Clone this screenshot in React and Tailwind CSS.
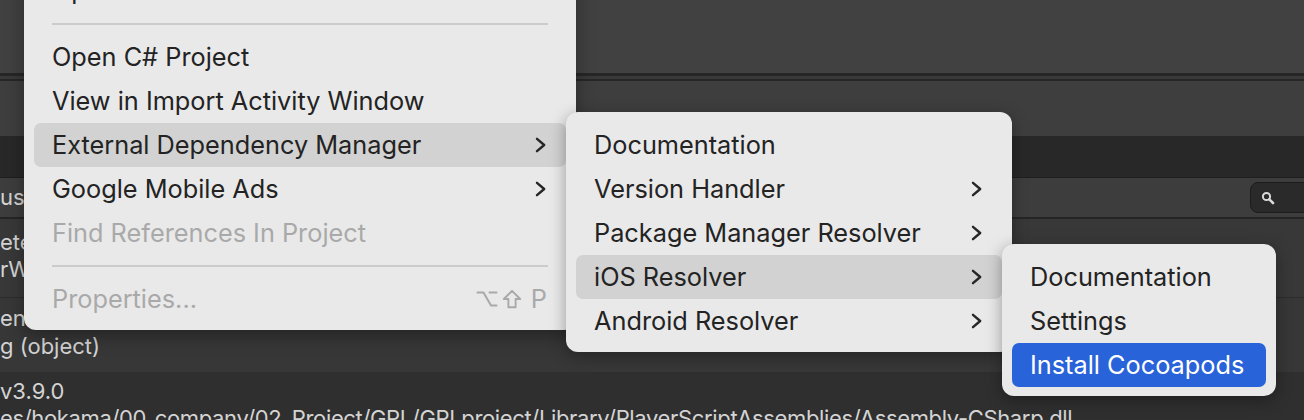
import React from "react";

const Chevron = () => (
  <svg width="13" height="16" viewBox="0 0 13 16" fill="none" className="shrink-0">
    <path d="M3 1.8L10.2 8L3 14.2" stroke="#262626" strokeWidth="2.4" strokeLinecap="round" strokeLinejoin="round" />
  </svg>
);

const Shortcut = () => (
  <span className="flex items-center gap-[4px] text-[#a9a9a9]">
    <svg width="22" height="18" viewBox="0 0 22 18" fill="none">
      <path d="M1.5 2.5H7.5L15 15.5H20.5M13.5 2.5H20.5" stroke="#a9a9a9" strokeWidth="2" strokeLinecap="round" strokeLinejoin="round" />
    </svg>
    <svg width="20" height="20" viewBox="0 0 20 20" fill="none">
      <path d="M10 1.8L18.2 10H13.6V18.2H6.4V10H1.8Z" stroke="#a9a9a9" strokeWidth="1.9" strokeLinejoin="round" />
    </svg>
    <span className="ml-[5px]">P</span>
  </span>
);

const Item = ({ label, sub, disabled, active, blue, shortcut }) => (
  <div
    className={
      "flex items-center justify-between h-[44px] mx-[10px] pl-[18px] pr-[19px] rounded-[7px] " +
      (blue ? "bg-[#2963d9] text-white" : active ? "bg-[#d2d2d2]" : "")
    }
  >
    <span className={"whitespace-nowrap " + (disabled ? "text-[#a9a9a9]" : blue ? "text-white" : "text-[#232323]")}>{label}</span>
    {sub ? <Chevron /> : null}
    {shortcut ? <Shortcut /> : null}
  </div>
);

const Sep = ({ h }) => (
  <div className={"flex items-center mx-[28px] " + h}>
    <div className="h-[2px] w-full bg-[#cbcbcb]" />
  </div>
);

export default function App() {
  return (
    <div
      className="relative w-[1304px] h-[420px] overflow-hidden bg-[#2e2e2e] text-[22px] text-[#d4d4d4]"
      style={{ fontFamily: "Inter, 'Noto Sans', sans-serif" }}
    >
      {/* background */}
      <div className="flex flex-col">
        <div className="h-[73px] bg-[#414141]" />
        <div className="h-[3px] bg-[#262626]" />
        <div className="h-[3px] bg-[#393939]" />
        <div className="h-[2px] bg-[#262626]" />
        <div className="h-[55px] bg-[#3e3e3e]" />
        <div className="h-[41px] bg-[#282828]" />
        <div className="h-[1px] bg-[#1f1f1f]" />
        <div className="h-[39px] bg-[#3d3d3d] flex items-center justify-between leading-[27px]">
          <span>used</span>
          <div className="w-[60px] h-[31px] mr-[-6px] rounded-l-[8px] bg-[#2a2a2a] border border-[#1c1c1c] flex items-center pl-[10px]">
            <svg width="14" height="14" viewBox="0 0 14 14" fill="none">
              <circle cx="5.5" cy="5.5" r="3.6" stroke="#d8d8d8" strokeWidth="2" />
              <path d="M8.3 8.3L12 12" stroke="#d8d8d8" strokeWidth="2.6" strokeLinecap="round" />
            </svg>
          </div>
        </div>
        <div className="h-[2px] bg-[#252525]" />
        <div className="h-[78px] bg-[#383838] pt-[10px] leading-[27px] flex flex-col">
          <span>eted</span>
          <span>rWindow</span>
        </div>
        <div className="h-[1px] bg-[#2c2c2c]" />
        <div className="h-[74px] bg-[#373737] pt-[6px] leading-[28px] flex flex-col">
          <span>ent</span>
          <span>g (object)</span>
        </div>
        <div className="h-[48px] bg-[#2f2f2f] pt-[6px] leading-[27px] flex flex-col whitespace-nowrap">
          <span>v3.9.0</span>
          <span className="tracking-[-0.35px]">es/hokama/00_company/02_Project/GPL/GPLproject/Library/PlayerScriptAssemblies/Assembly-CSharp.dll</span>
        </div>
      </div>

      {/* main menu */}
      <div className="absolute left-[24px] top-[-45px] w-[552px] pt-[13px] pb-[9px] bg-[#e9e9e9] rounded-[12px] text-[25.3px] shadow-[0_6px_18px_rgba(0,0,0,0.35)]">
        <Item label="Open C# Solution" />
        <Sep h="h-[23px]" />
        <Item label="Open C# Project" />
        <Item label="View in Import Activity Window" />
        <Item label="External Dependency Manager" sub active />
        <Item label="Google Mobile Ads" sub />
        <Item label="Find References In Project" disabled />
        <Sep h="h-[22px]" />
        <Item label="Properties..." disabled shortcut />
      </div>

      {/* submenu 1 */}
      <div className="absolute left-[566px] top-[112px] w-[446px] pt-[11px] pb-[9px] bg-[#e9e9e9] rounded-[12px] text-[25.3px] shadow-[0_4px_16px_rgba(0,0,0,0.35)]">
        <Item label="Documentation" />
        <Item label="Version Handler" sub />
        <Item label="Package Manager Resolver" sub />
        <Item label="iOS Resolver" sub active />
        <Item label="Android Resolver" sub />
      </div>

      {/* submenu 2 */}
      <div className="absolute left-[1002px] top-[244px] w-[274px] pt-[11px] pb-[9px] bg-[#e9e9e9] rounded-[12px] text-[25.3px] shadow-[0_4px_16px_rgba(0,0,0,0.35)]">
        <Item label="Documentation" />
        <Item label="Settings" />
        <Item label="Install Cocoapods" blue />
      </div>
    </div>
  );
}
